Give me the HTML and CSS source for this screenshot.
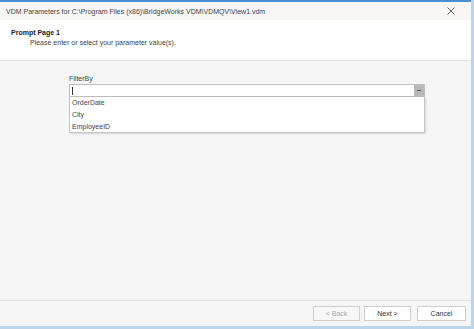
FILE: index.html
```html
<!DOCTYPE html>
<html lang="en">
<head>
  <meta charset="UTF-8" />
  <title>VDM Parameters</title>
  <link rel="stylesheet" href="styles.css">
</head>
<body>
  <div class="window">
    <div class="titlebar">
      <span class="title">VDM Parameters for C:\Program Files (x86)\BridgeWorks VDM\VDMQV\View1.vdm</span>
      <svg class="close" width="8" height="8" viewBox="0 0 8 8">
        <path d="M0.5 0.5 L7.5 7.5 M7.5 0.5 L0.5 7.5" stroke="#666" stroke-width="1" fill="none"/>
      </svg>
    </div>

    <div class="header">
      <div class="page-title">Prompt Page 1</div>
      <div class="page-hint">Please enter or select your parameter value(s).</div>
    </div>

    <div class="content">
      <div class="field">
        <label class="field-label">FilterBy</label>
        <div class="combo">
          <div class="combo-input"><span class="caret"></span></div>
          <div class="combo-btn"><span class="dash"></span></div>
        </div>
        <ul class="dropdown">
          <li>OrderDate</li>
          <li>City</li>
          <li>EmployeeID</li>
        </ul>
      </div>
    </div>

    <div class="footer">
      <button class="btn" disabled>&lt; Back</button>
      <button class="btn">Next &gt;</button>
      <button class="btn cancel">Cancel</button>
    </div>
  </div>
</body>
</html>
```

FILE: styles.css
```css
body {
  margin: 0;
  background: #bcd3e8;
  font-family: 'Liberation Sans', Arial, sans-serif;
  font-size: 7px;
  color: #333;
  width: 474px;
  height: 329px;
  overflow: hidden;
}

.window {
  width: 471px;
  height: 324px;
  border-top: 2px solid #4a8fd2;
  background: #f5f5f5;
  display: flex;
  flex-direction: column;
}

.titlebar {
  height: 18px;
  display: flex;
  align-items: center;
  justify-content: space-between;
  padding: 0 16px 0 6px;
  background: #f8f7f6;
  color: #444;
}

.header {
  height: 41px;
  background: #fff;
  border-bottom: 1px solid #e2e2e2;
  padding: 9px 0 0 11px;
  box-sizing: border-box;
}

.page-title {
  font-weight: bold;
  color: #222;
}

.page-hint {
  margin: 3px 0 0 19px;
  color: #444;
}

.content {
  flex: 1;
  padding: 13px 0 0 69px;
}

.field {
  width: 356px;
}

.field-label {
  display: block;
  color: #444;
  margin-bottom: 1px;
  line-height: 9px;
}

.combo {
  display: flex;
  height: 11px;
  border: 1px solid #bdbdbd;
  background: #fff;
}

.combo-input {
  flex: 1;
  display: flex;
  align-items: center;
  padding-left: 2px;
}

.caret {
  width: 1px;
  height: 8px;
  background: #333;
}

.combo-btn {
  width: 10px;
  background: #b9b9b9;
  display: flex;
  align-items: center;
  justify-content: center;
}

.dash {
  width: 4px;
  height: 1px;
  background: #555;
}

.dropdown {
  list-style: none;
  margin: 0;
  padding: 0;
  height: 35px;
  border: 1px solid #c4c4c4;
  border-top: none;
  background: #fff;
  box-shadow: 1px 1px 2px rgba(0, 0, 0, 0.12);
}

.dropdown li {
  height: 12px;
  line-height: 12px;
  padding-left: 2px;
  color: #444;
}

.footer {
  height: 25px;
  border-top: 1px solid #e2e2e2;
  display: flex;
  justify-content: flex-end;
  align-items: center;
  gap: 4px;
  padding-right: 5px;
}

.btn {
  width: 47px;
  height: 15px;
  padding: 0;
  font-family: inherit;
  font-size: 7px;
  color: #333;
  background: #fff;
  border: 1px solid #cfcfcf;
}

.btn:disabled {
  color: #aaa;
  background: #f7f7f7;
}

.cancel {
  width: 49px;
  margin-left: 2px;
}
```
